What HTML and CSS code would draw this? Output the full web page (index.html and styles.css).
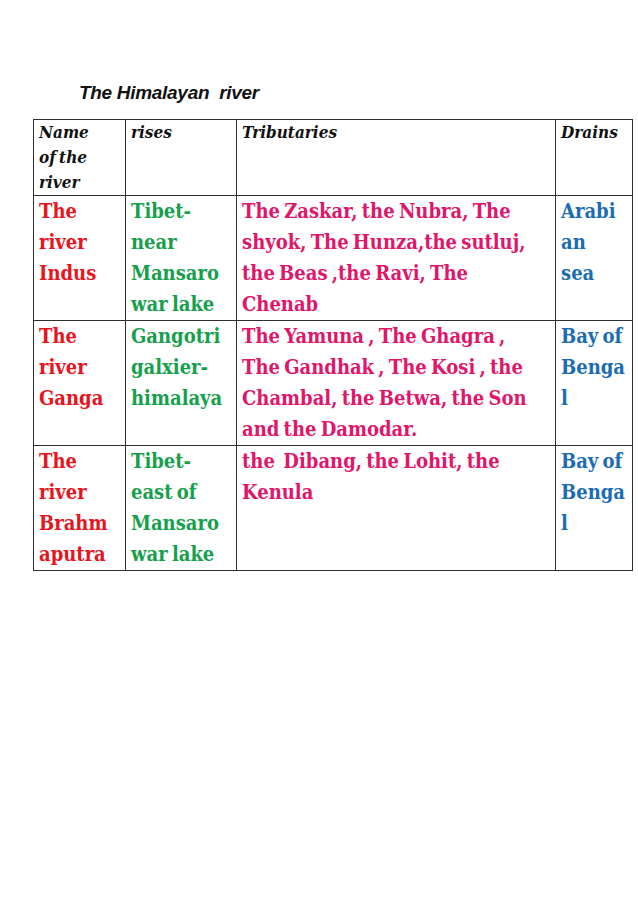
FILE: index.html
```html
<!DOCTYPE html>
<html lang="en">
<head>
<meta charset="utf-8">
<title>The Himalayan river</title>
<link rel="stylesheet" href="styles.css">
</head>
<body>
<div class="page">
  <h1 class="title">The Himalayan&nbsp; river</h1>
  <table class="rivers">
    <colgroup>
      <col class="c-name">
      <col class="c-rises">
      <col class="c-trib">
      <col class="c-drains">
    </colgroup>
    <thead>
      <tr>
        <th>Name<br>of the<br>river</th>
        <th>rises</th>
        <th>Tributaries</th>
        <th>Drains</th>
      </tr>
    </thead>
    <tbody>
      <tr>
        <td class="red">The<br>river<br>Indus</td>
        <td class="green">Tibet-<br>near<br>Mansaro<br>war lake</td>
        <td class="pink">The Zaskar, the Nubra, The<br>shyok, The Hunza,the sutluj,<br>the Beas ,the Ravi, The<br>Chenab</td>
        <td class="blue">Arabi<br>an<br>sea</td>
      </tr>
      <tr>
        <td class="red">The<br>river<br>Ganga</td>
        <td class="green">Gangotri<br>galxier-<br>himalaya</td>
        <td class="pink">The Yamuna , The Ghagra ,<br>The Gandhak , The Kosi , the<br>Chambal, the Betwa, the Son<br>and the Damodar.</td>
        <td class="blue">Bay of<br>Benga<br>l</td>
      </tr>
      <tr>
        <td class="red">The<br>river<br>Brahm<br>aputra</td>
        <td class="green">Tibet-<br>east of<br>Mansaro<br>war lake</td>
        <td class="pink">the&nbsp; Dibang, the Lohit, the<br>Kenula</td>
        <td class="blue">Bay of<br>Benga<br>l</td>
      </tr>
    </tbody>
  </table>
</div>
</body>
</html>
```
FILE: styles.css
```css
html, body {
  margin: 0;
  padding: 0;
  background: #ffffff;
}

.page {
  padding: 82px 0 0 33px;
}

.title {
  margin: 0 0 15px 46px;
  font-family: "Liberation Sans", Arial, sans-serif;
  font-size: 19px;
  line-height: 22px;
  font-weight: bold;
  font-style: italic;
  letter-spacing: -0.3px;
  color: #111111;
}

.rivers {
  border-collapse: collapse;
  table-layout: fixed;
  width: 599px;
}

.c-name { width: 92px; }
.c-rises { width: 111px; }
.c-trib { width: 319px; }
.c-drains { width: 77px; }

.rivers th,
.rivers td {
  border: 1px solid #2f2f2f;
  vertical-align: top;
  text-align: left;
  white-space: nowrap;
  padding: 0 4px 0 5px;
}

.rivers th {
  font-family: "DejaVu Serif Condensed", "DejaVu Serif", "Liberation Serif", serif;
  font-stretch: condensed;
  font-weight: bold;
  font-style: italic;
  font-size: 17px;
  line-height: 25px;
  word-spacing: -2px;
  color: #111111;
  height: 75px;
}

.rivers td {
  font-family: "DejaVu Serif Condensed", "DejaVu Serif", "Liberation Serif", serif;
  font-stretch: condensed;
  font-weight: bold;
  font-size: 20px;
  line-height: 31px;
  word-spacing: -2px;
  height: 124px;
}

.red { color: #e8141e; }
.green { color: #16a04c; }
.pink { color: #e0166a; }
.blue { color: #1a6db3; }
```
